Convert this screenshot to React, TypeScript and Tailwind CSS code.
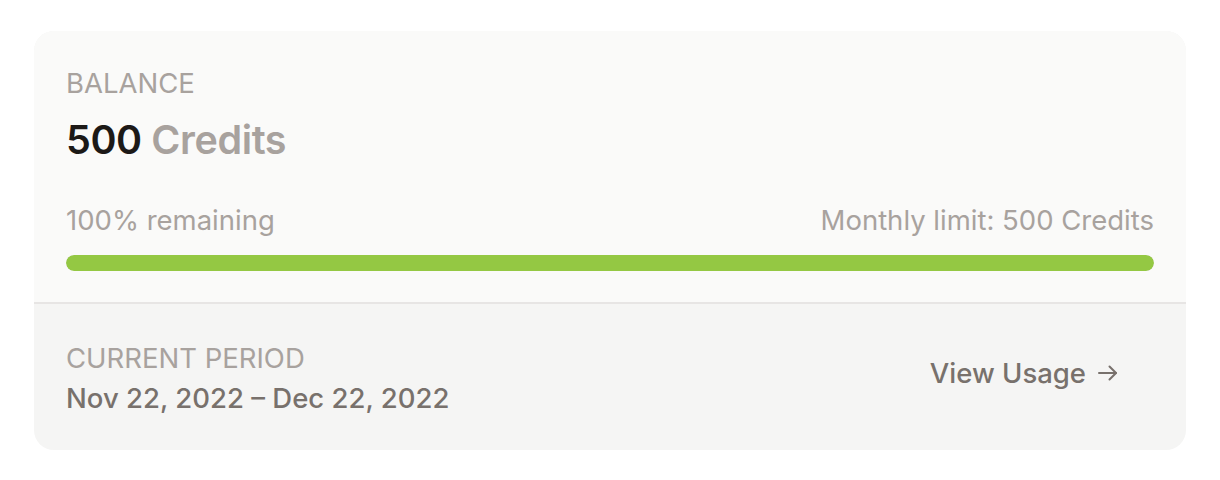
import React from 'react';

const App: React.FC = () => {
  const used = 0;
  const limit = 500;
  const remaining = Math.round(((limit - used) / limit) * 100);

  return (
    <div className="min-h-screen bg-white pt-[31px] px-[34px] font-['Inter',sans-serif]">
      <div className="w-[1152px] rounded-[20px] overflow-hidden bg-[#f5f5f4]">
        {/* Balance */}
        <div className="bg-[#fafaf9] px-8 pt-8 pb-[31px] border-b-2 border-[#e7e5e4]">
          <div className="text-[27.5px] leading-[40px] text-[#a8a29e]">BALANCE</div>
          <div className="mt-[13px] text-[39.5px] leading-[48px] font-semibold tracking-[-0.01em]">
            <span className="text-[#1c1917]">500</span>{' '}
            <span className="text-[#a8a29e]">Credits</span>
          </div>
          <div className="mt-[36px] flex justify-between text-[27.5px] leading-[40px] text-[#a8a29e]">
            <span>{remaining}% remaining</span>
            <span>Monthly limit: 500 Credits</span>
          </div>
          <div className="mt-[15px] h-4 rounded-full bg-[#e7e5e4] overflow-hidden">
            <div className="h-full rounded-full bg-[#94c843]" style={{ width: `${remaining}%` }} />
          </div>
        </div>

        {/* Period */}
        <div className="flex items-center justify-between px-8 pt-[34px] pb-[32px]">
          <div>
            <div className="text-[27.5px] leading-[40px] text-[#a8a29e]">CURRENT PERIOD</div>
            <div className="text-[27.5px] leading-[40px] font-medium text-[#78716c]">
              Nov 22, 2022 – Dec 22, 2022
            </div>
          </div>
          <button className="mr-[34px] mb-[10px] flex items-center gap-[10px] text-[27.5px] leading-[40px] font-medium text-[#78716c]">
            View Usage
            <svg width="24" height="24" viewBox="0 0 24 24" fill="none" stroke="currentColor" strokeWidth="2" strokeLinecap="round" strokeLinejoin="round">
              <path d="M3 12h17" />
              <path d="M13.5 5.5L20 12l-6.5 6.5" />
            </svg>
          </button>
        </div>
      </div>
    </div>
  );
};

export default App;
